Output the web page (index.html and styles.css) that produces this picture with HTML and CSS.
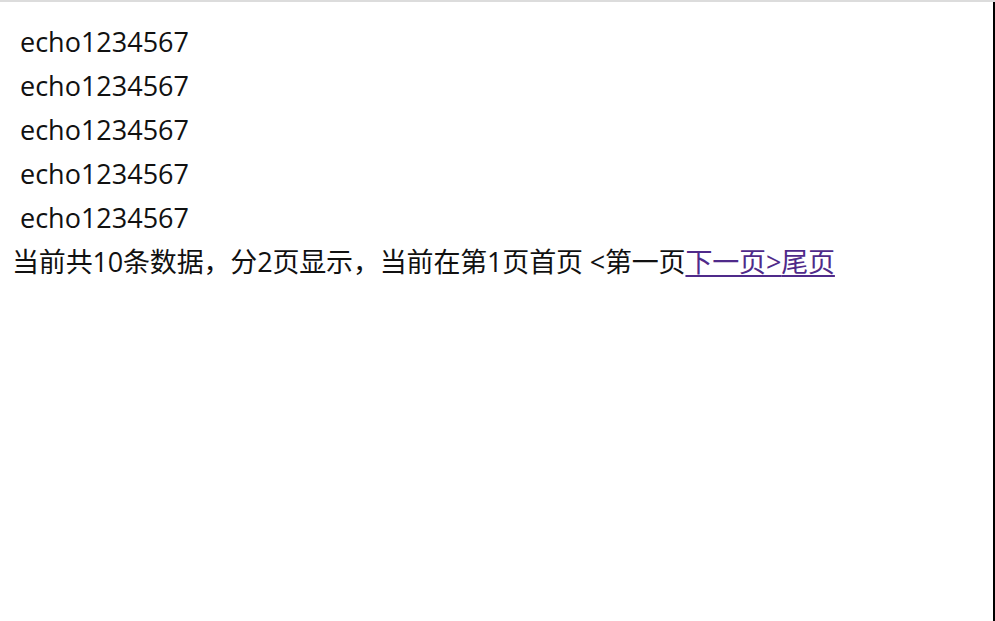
FILE: index.html
```html
<!DOCTYPE html>
<html lang="zh-CN">
<head>
<meta charset="utf-8">
<title>分页</title>
<link rel="stylesheet" href="styles.css">
</head>
<body>
<div class="page">
  <div class="list">
    <div class="item">echo1234567</div>
    <div class="item">echo1234567</div>
    <div class="item">echo1234567</div>
    <div class="item">echo1234567</div>
    <div class="item">echo1234567</div>
  </div>
  <div class="pager">当前共10条数据，分2页显示，当前在第1页首页 &lt;第一页<a class="link" href="#">下一页&gt;</a><a class="link" href="#">尾页</a></div>
</div>
</body>
</html>
```
FILE: styles.css
```css
html, body {
  margin: 0;
  padding: 0;
  height: 100%;
  background: #ffffff;
}
body {
  font-family: "Open Sans", "Noto Sans CJK SC", sans-serif;
  font-size: 27px;
  color: #111111;
  border-top: 2px solid #dcdcdc;
  box-sizing: border-box;
  overflow: hidden;
}
.page {
  height: 100%;
  box-sizing: border-box;
  border-right: 2px solid #000000;
  padding: 18px 0 0 12px;
}
.list {
  display: flex;
  flex-direction: column;
}
.item {
  line-height: 44px;
  padding-left: 8px;
}
.pager {
  line-height: 44px;
  white-space: nowrap;
  letter-spacing: -0.17px;
}
.link {
  color: #4f2a8a;
  text-decoration: underline;
  text-decoration-thickness: 2px;
  text-underline-offset: 3px;
}
```
